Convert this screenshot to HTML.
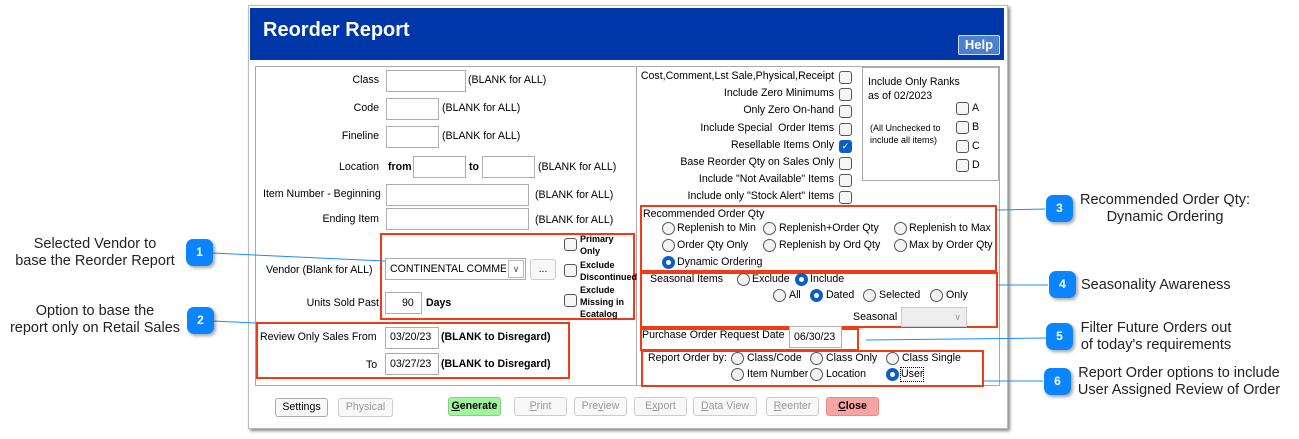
<!DOCTYPE html>
<html><head><meta charset="utf-8"><style>
*{box-sizing:border-box;margin:0;padding:0}
body{width:1299px;height:439px;background:#fff;position:relative;overflow:hidden;font-family:"Liberation Sans",Arial,sans-serif;font-size:10.6px;color:#000}
.a{position:absolute;white-space:nowrap;line-height:13px}
.in{position:absolute;border:1px solid #adadad;background:#fff}
.r{text-align:right}
.b{font-weight:bold}
.cb{position:absolute;width:13px;height:13px;border:1px solid #555;border-radius:3px;background:#f6f6f6}
.rd{position:absolute;width:13px;height:13px;border:1px solid #555;border-radius:50%;background:#f3f3f3}
.rd.on{background:#0a5fc4;border-color:#0a5fc4}
.rd.on::after{content:"";position:absolute;left:3px;top:3px;width:5px;height:5px;border-radius:50%;background:#fff}
.red{position:absolute;border:2px solid #f03c14}
.btn{position:absolute;height:19px;border:1px solid #ccc;border-radius:3px;background:#f8f8f8;text-align:center;line-height:17px;color:#999}
.bub{position:absolute;width:27px;height:27px;border-radius:7px;background:#0a84ff;color:#fff;font-weight:bold;font-size:12px;text-align:center;line-height:27px;box-shadow:2px 2px 3px rgba(0,0,0,.35)}
.ct{position:absolute;font-size:14.5px;line-height:17px;text-align:center;color:#222;white-space:nowrap}
</style></head><body>
<div style="position:absolute;left:248px;top:5px;width:760px;height:424px;border:1px solid #bbb;box-shadow:2px 2px 3px #888;background:#fff"></div>
<div style="position:absolute;left:250px;top:8px;width:754px;height:52px;background:#0037a8"></div>
<div class="a b" style="left:263px;top:18px;font-size:20px;line-height:24px;color:#fff">Reorder Report</div>
<div class="a b" style="left:958px;top:35px;width:42px;height:20px;border:1px solid #cfd8ff;border-radius:2px;background:#4d7fd0;color:#fff;font-size:13px;line-height:18px;text-align:center">Help</div>
<div style="position:absolute;left:255px;top:66px;width:745px;height:320px;border:1px solid #aaa"></div>
<div style="position:absolute;left:636px;top:66px;width:1px;height:320px;background:#aaa"></div>
<div style="position:absolute;left:862px;top:67px;width:137px;height:114px;border:1px solid #aaa"></div>

<div class="a r" style="left:300px;top:74px;width:79px">Class</div><div class="in" style="left:386px;top:70px;width:80px;height:22px"></div><div class="a" style="left:468px;top:74px">(BLANK for ALL)</div>
<div class="a r" style="left:300px;top:102px;width:79px">Code</div><div class="in" style="left:386px;top:98px;width:53px;height:22px"></div><div class="a" style="left:442px;top:102px">(BLANK for ALL)</div>
<div class="a r" style="left:300px;top:130px;width:79px">Fineline</div><div class="in" style="left:386px;top:126px;width:53px;height:22px"></div><div class="a" style="left:442px;top:130px">(BLANK for ALL)</div>
<div class="a r" style="left:300px;top:161px;width:79px">Location</div><div class="a b" style="left:388px;top:161px">from</div><div class="in" style="left:413px;top:156px;width:53px;height:22px"></div><div class="a b" style="left:469px;top:161px">to</div><div class="in" style="left:482px;top:156px;width:53px;height:22px"></div><div class="a" style="left:538px;top:161px">(BLANK for ALL)</div>
<div class="a" style="left:263px;top:188px">Item Number - Beginning</div><div class="in" style="left:386px;top:184px;width:143px;height:22px"></div><div class="a" style="left:535px;top:189px">(BLANK for ALL)</div>
<div class="a r" style="left:300px;top:213px;width:79px">Ending Item</div><div class="in" style="left:386px;top:208px;width:143px;height:22px"></div><div class="a" style="left:535px;top:214px">(BLANK for ALL)</div>

<div class="red" style="left:380px;top:233px;width:255px;height:87px"></div>
<div class="a" style="left:266px;top:264px">Vendor (Blank for ALL)</div>
<div class="in" style="left:385px;top:258px;width:141px;height:22px"></div><div class="a" style="left:390px;top:263px;width:116px;overflow:hidden">CONTINENTAL COMMER</div>
<div style="position:absolute;left:508px;top:260px;width:16px;height:18px;border:1px solid #bbb;background:#fff;font-size:9px;text-align:center;line-height:16px;color:#555">&#8744;</div>
<div class="btn" style="left:530px;top:259px;width:26px;height:21px;color:#000;line-height:19px">...</div>
<div class="cb" style="left:564px;top:238px"></div><div class="a b" style="left:580px;top:233px;font-size:9px;line-height:12px">Primary<br>Only</div>
<div class="cb" style="left:564px;top:264px"></div><div class="a b" style="left:580px;top:259px;font-size:9px;line-height:12px">Exclude<br>Discontinued</div>
<div class="cb" style="left:564px;top:294px"></div><div class="a b" style="left:580px;top:284px;font-size:9px;line-height:12px">Exclude<br>Missing in<br>Ecatalog</div>
<div class="a r" style="left:280px;top:297px;width:99px">Units Sold Past</div><div class="in" style="left:385px;top:292px;width:37px;height:22px"></div><div class="a" style="left:402px;top:297px">90</div><div class="a b" style="left:426px;top:297px">Days</div>

<div class="red" style="left:256px;top:322px;width:314px;height:57px"></div>
<div class="a" style="left:260px;top:331px">Review Only Sales From</div><div class="in" style="left:385px;top:327px;width:54px;height:22px"></div><div class="a" style="left:390px;top:331px">03/20/23</div><div class="a b" style="left:441px;top:331px">(BLANK to Disregard)</div>
<div class="a" style="left:366px;top:359px">To</div><div class="in" style="left:385px;top:353px;width:54px;height:22px"></div><div class="a" style="left:390px;top:358px">03/27/23</div><div class="a b" style="left:441px;top:358px">(BLANK to Disregard)</div>

<div class="a r" style="left:600px;top:70px;width:234px">Cost,Comment,Lst Sale,Physical,Receipt</div><div class="cb" style="left:839px;top:71px"></div>
<div class="a r" style="left:600px;top:87px;width:234px">Include Zero Minimums</div><div class="cb" style="left:839px;top:88px"></div>
<div class="a r" style="left:600px;top:104px;width:234px">Only Zero On-hand</div><div class="cb" style="left:839px;top:105px"></div>
<div class="a r" style="left:600px;top:122px;width:234px">Include Special&nbsp; Order Items</div><div class="cb" style="left:839px;top:123px"></div>
<div class="a r" style="left:600px;top:139px;width:234px">Resellable Items Only</div><div class="cb" style="left:839px;top:140px;background:#0a5fc4;border-color:#0a5fc4;color:#fff;font-size:9px;line-height:11px;text-align:center">&#10003;</div>
<div class="a r" style="left:600px;top:156px;width:234px">Base Reorder Qty on Sales Only</div><div class="cb" style="left:839px;top:157px"></div>
<div class="a r" style="left:600px;top:173px;width:234px">Include "Not Available" Items</div><div class="cb" style="left:839px;top:174px"></div>
<div class="a r" style="left:600px;top:190px;width:234px">Include only "Stock Alert" Items</div><div class="cb" style="left:839px;top:191px"></div>

<div class="a" style="left:868px;top:75px;line-height:14px">Include Only Ranks<br>as of 02/2023</div>
<div class="a" style="left:870px;top:122px;font-size:9px;line-height:12px">(All Unchecked to<br>include all items)</div>
<div class="cb" style="left:956px;top:102px"></div><div class="a" style="left:972px;top:102px">A</div>
<div class="cb" style="left:956px;top:121px"></div><div class="a" style="left:972px;top:121px">B</div>
<div class="cb" style="left:956px;top:140px"></div><div class="a" style="left:972px;top:140px">C</div>
<div class="cb" style="left:956px;top:159px"></div><div class="a" style="left:972px;top:159px">D</div>

<div class="red" style="left:640px;top:205px;width:357px;height:67px"></div>
<div class="a" style="left:643px;top:208px">Recommended Order Qty</div>
<div class="rd" style="left:662px;top:222px"></div><div class="a" style="left:677px;top:222px">Replenish to Min</div>
<div class="rd" style="left:763px;top:222px"></div><div class="a" style="left:779px;top:222px">Replenish+Order Qty</div>
<div class="rd" style="left:894px;top:222px"></div><div class="a" style="left:909px;top:222px">Replenish to Max</div>
<div class="rd" style="left:662px;top:239px"></div><div class="a" style="left:677px;top:239px">Order Qty Only</div>
<div class="rd" style="left:763px;top:239px"></div><div class="a" style="left:779px;top:239px">Replenish by Ord Qty</div>
<div class="rd" style="left:894px;top:239px"></div><div class="a" style="left:909px;top:239px">Max by Order Qty</div>
<div class="rd on" style="left:662px;top:256px"></div><div class="a" style="left:677px;top:256px">Dynamic Ordering</div>

<div class="red" style="left:640px;top:272px;width:358px;height:56px"></div>
<div class="a" style="left:650px;top:273px">Seasonal Items</div>
<div class="rd" style="left:737px;top:273px"></div><div class="a" style="left:752px;top:273px">Exclude</div>
<div class="rd on" style="left:795px;top:273px"></div><div class="a" style="left:810px;top:273px">Include</div>
<div class="rd" style="left:773px;top:289px"></div><div class="a" style="left:789px;top:289px">All</div>
<div class="rd on" style="left:810px;top:289px"></div><div class="a" style="left:826px;top:289px">Dated</div>
<div class="rd" style="left:863px;top:289px"></div><div class="a" style="left:879px;top:289px">Selected</div>
<div class="rd" style="left:930px;top:289px"></div><div class="a" style="left:946px;top:289px">Only</div>
<div class="a" style="left:853px;top:311px">Seasonal</div>
<div style="position:absolute;left:901px;top:307px;width:66px;height:20px;border:1px solid #ccc;background:#eee;font-size:9px;color:#999;text-align:right;padding-right:5px;line-height:18px">&#8744;</div>

<div class="red" style="left:640px;top:328px;width:219px;height:23px"></div>
<div class="a" style="left:642px;top:329px">Purchase Order Request Date</div>
<div class="in" style="left:789px;top:326px;width:53px;height:22px"></div><div class="a" style="left:794px;top:331px">06/30/23</div>

<div class="red" style="left:641px;top:350px;width:343px;height:37px"></div>
<div class="a" style="left:648px;top:352px">Report Order by:</div>
<div class="rd" style="left:731px;top:352px"></div><div class="a" style="left:747px;top:352px">Class/Code</div>
<div class="rd" style="left:810px;top:352px"></div><div class="a" style="left:826px;top:352px">Class Only</div>
<div class="rd" style="left:886px;top:352px"></div><div class="a" style="left:902px;top:352px">Class Single</div>
<div class="rd" style="left:731px;top:368px"></div><div class="a" style="left:747px;top:368px">Item Number</div>
<div class="rd" style="left:810px;top:368px"></div><div class="a" style="left:826px;top:368px">Location</div>
<div class="rd on" style="left:886px;top:368px"></div><div class="a" style="left:901px;top:368px;outline:1px dotted #000">User</div>

<div class="btn" style="left:275px;top:398px;width:53px;color:#000;border-color:#aaa">Settings</div>
<div class="btn" style="left:338px;top:398px;width:55px">Physical</div>
<div class="btn" style="left:448px;top:397px;width:53px;background:#9ff59a;border-color:#8c8;color:#000;font-weight:bold"><u>G</u>enerate</div>
<div class="btn" style="left:514px;top:397px;width:53px"><u>P</u>rint</div>
<div class="btn" style="left:574px;top:397px;width:53px">Pre<u>v</u>iew</div>
<div class="btn" style="left:634px;top:397px;width:53px">E<u>x</u>port</div>
<div class="btn" style="left:693px;top:397px;width:64px"><u>D</u>ata View</div>
<div class="btn" style="left:766px;top:397px;width:53px"><u>R</u>eenter</div>
<div class="btn" style="left:826px;top:397px;width:53px;background:#f9a3a3;border-color:#e88;color:#000;font-weight:bold"><u>C</u>lose</div>

<svg style="position:absolute;left:0;top:0" width="1299" height="439">
<g stroke="#1a8cff" stroke-width="1" fill="none">
<line x1="212" y1="253" x2="385" y2="261"/>
<line x1="213" y1="321" x2="256" y2="323"/>
<line x1="1045" y1="209" x2="996" y2="210"/>
<line x1="1048" y1="285" x2="997" y2="285"/>
<line x1="1046" y1="338" x2="866" y2="340"/>
<line x1="1043" y1="381" x2="983" y2="381"/>
</g></svg>
<div class="bub" style="left:186px;top:239px">1</div>
<div class="bub" style="left:187px;top:307px">2</div>
<div class="bub" style="left:1046px;top:195px">3</div>
<div class="bub" style="left:1049px;top:271px">4</div>
<div class="bub" style="left:1046px;top:323px">5</div>
<div class="bub" style="left:1044px;top:368px">6</div>
<div class="ct" style="left:10px;top:236px;width:170px">Selected Vendor to<br>base the Reorder Report</div>
<div class="ct" style="left:5px;top:303px;width:180px">Option to base the<br>report only on Retail Sales</div>
<div class="ct" style="left:1075px;top:192px;width:180px">Recommended Order Qty:<br>Dynamic Ordering</div>
<div class="ct" style="left:1081px;top:277px;text-align:left">Seasonality Awareness</div>
<div class="ct" style="left:1077px;top:320px;width:158px">Filter Future Orders out<br>of today's requirements</div>
<div class="ct" style="left:1074px;top:365px;width:210px">Report Order options to include<br>User Assigned Review of Order</div>
</body></html>
